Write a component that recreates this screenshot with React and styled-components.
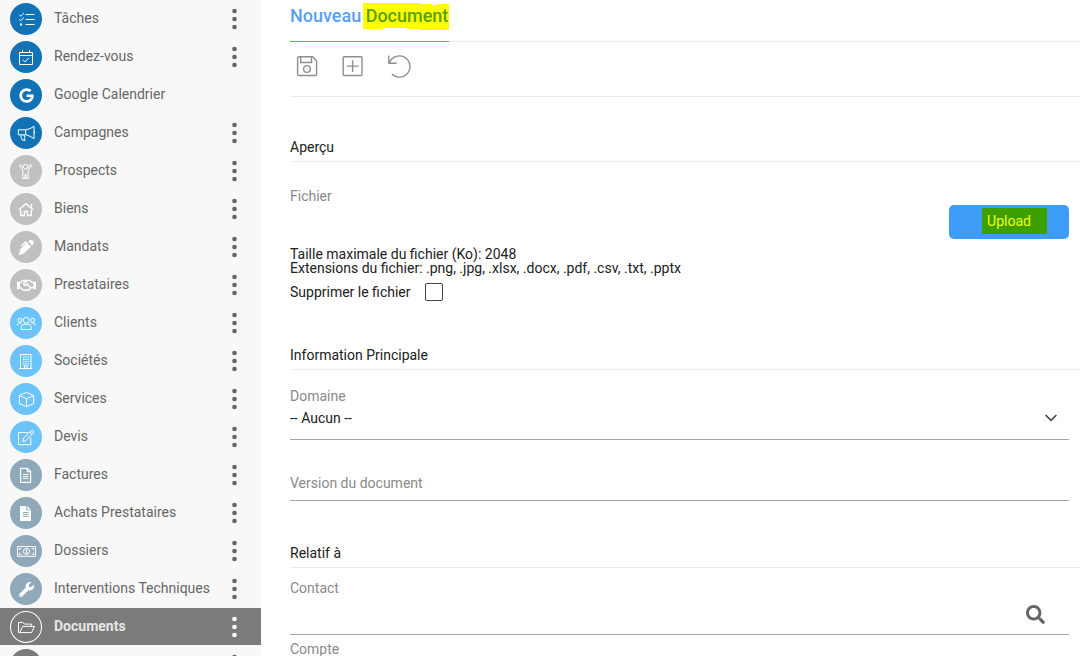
import React from "react";
import styled, { createGlobalStyle } from "styled-components";
import { FaGoogle, FaRegHandshake, FaSearch, FaWrench } from "react-icons/fa";

const GlobalStyle = createGlobalStyle`
  *, *::before, *::after { box-sizing: border-box; }
  body {
    margin: 0;
    background: #fff;
    color: #212121;
    font-family: Roboto, "Liberation Sans", sans-serif;
    font-size: 14px;
    line-height: 20px;
  }
  button, input, select { font: inherit; color: inherit; }
`;

const Page = styled.div`
  display: flex;
  height: 100vh;
  overflow: hidden;
`;

const Sidebar = styled.nav`
  flex: 0 0 261px;
  background: #f8f8f8;
  overflow: hidden;
`;

const Menu = styled.ul`
  margin: 0;
  padding: 0;
  list-style: none;
`;

const MenuItem = styled.li`
  display: flex;
  align-items: flex-start;
  justify-content: space-between;
  height: 37px;
  margin-bottom: 1px;
  padding: 3px 24px 0 10px;
  background: ${(p) => (p.$active ? "#7b7b7b" : "transparent")};
  color: ${(p) => (p.$active ? "#e6e6e6" : "#666")};
  font-weight: ${(p) => (p.$active ? 700 : 400)};
`;

const MenuLink = styled.a`
  display: flex;
  gap: 12px;
  color: inherit;
  line-height: 30px;
  text-decoration: none;
  white-space: nowrap;
`;

const Badge = styled.span`
  display: flex;
  align-items: center;
  justify-content: center;
  width: 32px;
  height: 32px;
  border-radius: 50%;
  background: ${(p) => p.$color};
  box-shadow: ${(p) => (p.$outlined ? "inset 0 0 0 1px #fff" : "none")};
  color: #fff;
`;

const Glyph = styled.svg`
  display: block;
  width: 32px;
  height: 32px;
  fill: none;
  stroke: currentColor;
  stroke-width: 1;
`;

const MoreButton = styled.button`
  display: block;
  height: 32px;
  padding: 0;
  border: 0;
  background: none;
  color: ${(p) => (p.$active ? "#fff" : "#666")};
  svg { display: block; fill: currentColor; }
`;

const Main = styled.main`
  flex: 1;
  min-width: 0;
  padding-left: 29px;
`;

const TitleBar = styled.header`
  display: flex;
  height: 42px;
  border-bottom: 1px solid #ececec;
`;

const Title = styled.h1`
  height: 42px;
  margin: 0;
  padding-top: 2px;
  border-bottom: 1px solid #5a9ff5;
  color: #5a9ff5;
  font-size: 18px;
  font-weight: 500;
  line-height: 28px;
  white-space: nowrap;
`;

const TitleMark = styled.mark`
  display: inline-block;
  margin-left: -3px;
  padding: 0 1px 0 3px;
  background: #ff0;
  color: #5a9f00;
  clip-path: polygon(0 1px, 66% 1px, 66% 2px, 80% 2px, 80% 3px, 86% 3px, 86% 2px, 100% 2px, 100% 100%, 65% 100%, 65% 27px, 51% 27px, 51% 26px, 23% 26px, 23% 27px, 0 27px);
`;

const Toolbar = styled.div`
  display: flex;
  gap: 22px;
  height: 55px;
  padding: 12px 5px;
  border-bottom: 1px solid #ececec;
`;

const ToolButton = styled.button`
  width: 24px;
  height: 24px;
  padding: 0;
  border: 0;
  background: none;
  color: #8e8e8e;
  svg { display: block; fill: none; stroke: currentColor; stroke-width: 1.4; }
`;

const SectionTitle = styled.h2`
  margin: ${(p) => p.$gap}px 0 0;
  padding-bottom: 4px;
  border-bottom: 1px solid #ececec;
  font-size: 14px;
  font-weight: 400;
`;

const FileField = styled.div`
  display: flex;
  justify-content: space-between;
  align-items: flex-start;
  padding: 24px 11px 0 0;
`;

const Label = styled.label`
  display: block;
  color: #8a8a8a;
`;

const Notes = styled.p`
  margin: 41px 0 8px;
  line-height: 14px;
`;

const CheckRow = styled.div`
  display: flex;
  align-items: center;
  gap: 14px;
  height: 18px;
`;

const CheckBox = styled.input`
  appearance: none;
  width: 18px;
  height: 18px;
  margin: 0;
  border: 1px solid #444;
  border-radius: 2px;
  background: #fff;
  &:checked { background: #3d9df6; }
`;

const UploadButton = styled.button`
  display: flex;
  align-items: center;
  justify-content: center;
  width: 120px;
  height: 34px;
  margin-top: 19px;
  padding: 0 0 2px;
  border: 0;
  border-radius: 5px;
  background: #3d9df6;
`;

const UploadMark = styled.mark`
  margin: 0 -16px 0 -5px;
  padding: 0 16px 0 5px;
  background: #3e9f00;
  color: #f0ff00;
  line-height: 26px;
`;

const Field = styled.div`
  display: grid;
  margin: ${(p) => p.$gap}px 11px 0 0;
  border-bottom: ${(p) => (p.$open ? "0" : "1px solid #a6a6a6")};
`;

const SelectWrap = styled.div`
  display: flex;
  align-items: center;
  height: 33px;
  padding: 0 12px 10px 0;
`;

const Select = styled.select`
  flex: 1;
  min-width: 0;
  height: 20px;
  padding: 0;
  border: 0;
  outline: 0;
  appearance: none;
  background: none;
`;

const FloatingLabel = styled(Label)`
  grid-area: 1 / 1;
  pointer-events: none;
`;

const TextInput = styled.input`
  grid-area: ${(p) => (p.$overlaid ? "1 / 1" : "auto")};
  flex: 1;
  min-width: 0;
  height: 27px;
  padding: 0;
  border: 0;
  outline: 0;
  background: none;
`;

const LookupRow = styled.div`
  display: flex;
  align-items: flex-start;
  height: 36px;
  padding-right: 24px;
`;

const SearchButton = styled.button`
  margin-top: 7px;
  padding: 0;
  border: 0;
  background: none;
  color: #666;
  svg { display: block; }
`;

const TasksIcon = () => (
  <Glyph viewBox="0 0 32 32">
    <path d="M9.3 11.8l1.4 1.4 3.2-3.2M9.3 16.3l1.4 1.4 3.2-3.2M15.5 11.5h9M15.5 16.5h9M15.5 21.5h9" />
    <rect x="10" y="20.5" width="2" height="2" fill="currentColor" stroke="none" />
  </Glyph>
);

const CalendarIcon = () => (
  <Glyph viewBox="0 0 32 32">
    <path d="M9.5 11.5h13v12h-13zM9.5 14.5h13M12.5 9v2.5M19.5 9v2.5M12.7 18.7l2.2 2.2 4-4.1" />
  </Glyph>
);

const MegaphoneIcon = () => (
  <Glyph viewBox="0 0 32 32">
    <path d="M8.3 12.8h7.4v5H8.3zM15.7 12.8q4.6-.6 8.3-3.6v12.6q-3.7-3.2-8.3-4M24.5 14.2v2.3M10.6 17.8q.3 3.2 2 5.5h2.6l-1-2 .8-1.2-1.3-2.3" />
  </Glyph>
);

const PersonIcon = () => (
  <Glyph viewBox="0 0 32 32">
    <circle cx="15.5" cy="11.7" r="2.3" />
    <path d="M13.2 12.9l-2.5-3.1q-1.3 0-1.2 1.2l3.3 4.2v8.3h2.2v-4h1v4h2.2v-8.3l3.3-4.2q.1-1.2-1.2-1.2l-2.5 3.1" />
  </Glyph>
);

const HomeIcon = () => (
  <Glyph viewBox="0 0 32 32">
    <path d="M8.8 16.8l7.2-6.2 7.2 6.2M21.5 14.5v-3.7" strokeWidth="1.4" />
    <path d="M10.7 16.7v5.8h3.8v-4h3v4h3.8v-5.8" strokeWidth="1.4" />
  </Glyph>
);

const PenIcon = () => (
  <Glyph viewBox="0 0 32 32">
    <path d="M16.6 11.6l4.4 4.2-7 6.4-5.1 2.1-.2-.2 1.6-5.8zM18.2 10.6l1.2-1.2q1.8-1.4 3.4.1 1.8 1.5.7 3.4l-1.4 1.6z" fill="currentColor" stroke="none" />
    <path d="M11.3 15.3l4.4-4.4 1.6 1.1" strokeWidth="1.3" />
  </Glyph>
);

const TeamIcon = () => (
  <Glyph viewBox="0 0 32 32">
    <circle cx="16.3" cy="13.2" r="3" />
    <circle cx="9.8" cy="13.2" r="1.9" />
    <circle cx="22.8" cy="13.2" r="1.9" />
    <path d="M11.2 22.5v-2.1q.2-2.5 3-3.2 2.1 1 4.2 0 2.8.7 3 3.2v2.1zM7.4 18.6q0-2.1 1.6-2.7 1.3.7 2.8 0M25.2 18.6q0-2.1-1.6-2.7-1.3.7-2.8 0" />
  </Glyph>
);

const BuildingIcon = () => (
  <Glyph viewBox="0 0 32 32">
    <path d="M10.5 23.5v-14h10.5v14M9 23.5h13.2M14.5 23.5v-2.8h2.6v2.8" />
    <path d="M13 12h1.5M15.2 12h1.5M17.5 12h1.5M13 14.3h1.5M15.2 14.3h1.5M17.5 14.3h1.5M13 16.6h1.5M15.2 16.6h1.5M17.5 16.6h1.5M13 18.9h1.5M15.2 18.9h1.5M17.5 18.9h1.5" />
  </Glyph>
);

const CubeIcon = () => (
  <Glyph viewBox="0 0 32 32" strokeLinejoin="round">
    <path d="M16.5 9.5l7.2 3v8l-7.2 3.3-7.2-3.3v-8zM9.3 12.5l7.2 3.2 7.2-3.2M16.5 15.7v8.1" />
  </Glyph>
);

const EditIcon = () => (
  <Glyph viewBox="0 0 32 32">
    <path d="M18 11.5H8.5v12.2h12.3v-7.2M12.8 20.5l.6-3.2 7.8-7.6q1-.7 2 .2t.2 2.1l-7.6 7.7zM19.8 11l2.2 2.2" />
  </Glyph>
);

const InvoiceIcon = () => (
  <Glyph viewBox="0 0 32 32">
    <path d="M10.6 9.3h6.8l3.2 3.2v10.9h-10zM17.2 9.3v3.4h3.4" strokeWidth="1.2" />
    <path d="M13 15.5h5.5M13 17.5h5.5M13 19.5h5.5" />
  </Glyph>
);

const PurchaseIcon = ({ color }) => (
  <Glyph viewBox="0 0 32 32">
    <path d="M10 9h6.3v4.2H21V24H10zM17.2 9l3.8 3.5h-3.8z" fill="currentColor" stroke="none" />
    <path d="M13 15.5h5.5M13 17.5h5.5M13 19.5h5.5" stroke={color} />
  </Glyph>
);

const MoneyIcon = () => (
  <Glyph viewBox="0 0 32 32">
    <path d="M7.5 11.5h18v9.8h-18zM9.4 15.2v-1.8h2M21.6 13.4h2v1.8M9.4 17.6v1.8h2M21.6 19.4h2v-1.8" />
    <circle cx="16.5" cy="16.4" r="3.1" />
    <path d="M15.5 15.5l1.1-.8v3.3M15.3 18h2.6" />
  </Glyph>
);

const FolderIcon = () => (
  <Glyph viewBox="0 0 32 32" strokeLinejoin="round">
    <path d="M9.7 21.6H8.5V11.4h4.3l1.5 1.7h7v2.2M9.7 21.6l3-6.2h11.8l-3 6.2z" />
  </Glyph>
);

const BLUE = "#1172b6";
const GREY = "#bfc0c2";
const SKY = "#6cc3f9";
const SLATE = "#8fa8ba";

const MENU = [
  { label: "Tâches", color: BLUE, icon: <TasksIcon /> },
  { label: "Rendez-vous", color: BLUE, icon: <CalendarIcon /> },
  { label: "Google Calendrier", color: BLUE, icon: <FaGoogle size={15} />, plain: true },
  { label: "Campagnes", color: BLUE, icon: <MegaphoneIcon /> },
  { label: "Prospects", color: GREY, icon: <PersonIcon /> },
  { label: "Biens", color: GREY, icon: <HomeIcon /> },
  { label: "Mandats", color: GREY, icon: <PenIcon /> },
  { label: "Prestataires", color: GREY, icon: <FaRegHandshake size={19} /> },
  { label: "Clients", color: SKY, icon: <TeamIcon /> },
  { label: "Sociétés", color: SKY, icon: <BuildingIcon /> },
  { label: "Services", color: SKY, icon: <CubeIcon /> },
  { label: "Devis", color: SKY, icon: <EditIcon /> },
  { label: "Factures", color: SLATE, icon: <InvoiceIcon /> },
  { label: "Achats Prestataires", color: SLATE, icon: <PurchaseIcon color={SLATE} /> },
  { label: "Dossiers", color: SLATE, icon: <MoneyIcon /> },
  { label: "Interventions Techniques", color: SLATE, icon: <FaWrench size={15} /> },
  { label: "Documents", color: "transparent", icon: <FolderIcon />, active: true },
  { label: "", color: "#7b7b7b", icon: null },
];

function MenuEntry({ item }) {
  return (
    <MenuItem $active={item.active}>
      <MenuLink href="#" aria-current={item.active ? "page" : undefined}>
        <Badge $color={item.color} $outlined={item.active}>{item.icon}</Badge>
        {item.label}
      </MenuLink>
      {!item.plain && (
        <MoreButton type="button" aria-label="Options" $active={item.active}>
          <svg width="5" height="32" viewBox="0 0 5 32">
            <circle cx="2.5" cy="8" r="2.3" />
            <circle cx="2.5" cy="16" r="2.3" />
            <circle cx="2.5" cy="24" r="2.3" />
          </svg>
        </MoreButton>
      )}
    </MenuItem>
  );
}

export default function App() {
  return (
    <Page>
      <GlobalStyle />
      <Sidebar>
        <Menu>
          {MENU.map((item, i) => <MenuEntry key={i} item={item} />)}
        </Menu>
      </Sidebar>
      <Main>
        <TitleBar>
          <Title>Nouveau <TitleMark>Document</TitleMark></Title>
        </TitleBar>
        <Toolbar>
          <ToolButton type="button" aria-label="Enregistrer">
            <svg width="24" height="24" viewBox="0 0 24 24">
              <path d="M3.8 2.7h13.8l4 4v13.6q0 1.2-1.2 1.2H3.8q-1.2 0-1.2-1.2V3.9q0-1.2 1.2-1.2zM5.7 2.7v5.8h10.8V2.7" />
              <circle cx="12" cy="15" r="3.4" />
            </svg>
          </ToolButton>
          <ToolButton type="button" aria-label="Ajouter">
            <svg width="24" height="24" viewBox="0 0 24 24">
              <rect x="2.2" y="2.7" width="18.8" height="18.8" rx="1" />
              <path d="M11.6 6.3v11.6M5.8 12.1h11.6" />
            </svg>
          </ToolButton>
          <ToolButton type="button" aria-label="Rétablir">
            <svg width="24" height="24" viewBox="0 0 24 24">
              <path d="M1.8 1.5v7.8h7.8M2.4 8.9A10.6 10.6 0 1 1 4.9 20.1" />
            </svg>
          </ToolButton>
        </Toolbar>
        <form onSubmit={(e) => e.preventDefault()}>
          <SectionTitle $gap={40}>Aperçu</SectionTitle>
          <FileField>
            <div>
              <Label htmlFor="upload">Fichier</Label>
              <Notes>
                Taille maximale du fichier (Ko): 2048<br />
                Extensions du fichier: .png, .jpg, .xlsx, .docx, .pdf, .csv, .txt, .pptx
              </Notes>
              <CheckRow>
                <label htmlFor="remove">Supprimer le fichier</label>
                <CheckBox id="remove" type="checkbox" />
              </CheckRow>
            </div>
            <UploadButton id="upload" type="button"><UploadMark>Upload</UploadMark></UploadButton>
          </FileField>

          <SectionTitle $gap={44}>Information Principale</SectionTitle>
          <Field $gap={16}>
            <Label htmlFor="domain">Domaine</Label>
            <SelectWrap>
              <Select id="domain"><option>-- Aucun --</option></Select>
              <svg width="12" height="8" viewBox="0 0 12 8" fill="none" stroke="#444" strokeWidth="1.5">
                <path d="M.6 1L6 6.4 11.4 1" />
              </svg>
            </SelectWrap>
          </Field>
          <Field $gap={33}>
            <FloatingLabel htmlFor="version">Version du document</FloatingLabel>
            <TextInput id="version" type="text" $overlaid />
          </Field>

          <SectionTitle $gap={42}>Relatif à</SectionTitle>
          <Field $gap={10}>
            <Label htmlFor="contact">Contact</Label>
            <LookupRow>
              <TextInput id="contact" type="text" />
              <SearchButton type="button" aria-label="Rechercher"><FaSearch size={19} /></SearchButton>
            </LookupRow>
          </Field>
          <Field $gap={4} $open>
            <Label htmlFor="account">Compte</Label>
            <TextInput id="account" type="text" />
          </Field>
        </form>
      </Main>
    </Page>
  );
}
